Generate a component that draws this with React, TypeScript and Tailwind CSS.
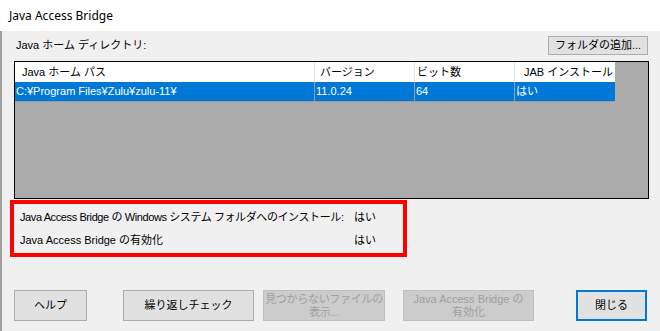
import React from "react";

const jp = "font-['Liberation_Sans','Noto_Sans_CJK_JP',sans-serif]";

function Btn({
  children,
  className = "",
  disabled = false,
  primary = false,
}: {
  children: React.ReactNode;
  className?: string;
  disabled?: boolean;
  primary?: boolean;
}) {
  const look = disabled
    ? "bg-[#cccccc] border border-[#bfbfbf] text-[#a0a0a0]"
    : primary
      ? "bg-[#e1e1e1] border-2 border-[#0078d7] text-black"
      : "bg-[#e1e1e1] border border-[#adadad] text-black";
  return (
    <div
      className={`h-[31px] flex flex-col items-center justify-center text-center leading-[13px] whitespace-nowrap ${look} ${className}`}
    >
      {children}
    </div>
  );
}

const cols = [
  { label: "Java ホーム パス", value: "C:¥Program Files¥Zulu¥zulu-11¥", w: "w-[300px]", pad: "pl-[7px]" },
  { label: "バージョン", value: "11.0.24", w: "w-[100px]", pad: "pl-[5px]" },
  { label: "ビット数", value: "64", w: "w-[100px]", pad: "pl-[2px]" },
  { label: "JAB インストール", value: "はい", w: "w-[100px]", pad: "pl-[9px]" },
];

export default function App() {
  return (
    <div className={`w-[660px] h-[331px] flex flex-col bg-[#f0f0f0] overflow-hidden whitespace-nowrap text-[11px] ${jp}`}>
      {/* Title bar */}
      <div className="h-[31px] shrink-0 bg-white flex items-center pl-[9px]">
        <span className="text-[12px] font-['Noto_Sans',sans-serif] text-black">
          Java Access Bridge
        </span>
      </div>

      <div className="flex-1 flex border-l-2 border-[#a0a0a0]">
        <div className="flex-1 flex flex-col pl-[12px] pr-[11px] text-black">
          {/* Home dir row */}
          <div className="mt-[5px] h-[19px] flex items-center justify-between">
            <span className="pl-[2px]">Java ホーム ディレクトリ:</span>
            <div className="h-[19px] w-[100px] mr-[1px] flex items-center justify-center bg-[#e1e1e1] border border-[#adadad]">
              フォルダの追加...
            </div>
          </div>

          {/* List view */}
          <div className="mt-[6px] h-[138px] w-[635px] border border-black bg-[#ababab] flex flex-col">
            <div className="h-[20px] flex">
              {cols.map((c, i) => (
                <div
                  key={c.label}
                  className={`${c.w} h-full bg-white flex items-center ${c.pad} ${i < 3 ? "border-r border-[#e5e5e5]" : ""}`}
                >
                  {c.label}
                </div>
              ))}
            </div>
            <div className="h-[20px] flex">
              {cols.map((c, i) => (
                <div
                  key={c.value}
                  className={`${c.w} h-full bg-[#0078d7] text-white flex items-center pl-[1px] border-b border-[#9a9a9a] ${i < 3 ? "border-r border-r-[#9a9a9a]" : ""}`}
                >
                  {c.value}
                </div>
              ))}
            </div>
          </div>

          {/* Highlighted status */}
          <div className="mt-[1px] ml-[-4px] w-[397px] h-[57px] border-4 border-[#ff0000] pl-[6px] pt-[3px]">
            <div className="grid grid-cols-[334px_1fr] h-[20px] items-center">
              <span className="tracking-[-0.4px]">Java Access Bridge の Windows システム フォルダへのインストール:</span>
              <span>はい</span>
            </div>
            <div className="grid grid-cols-[334px_1fr] h-[20px] items-center mt-[3px]">
              <span>Java Access Bridge の有効化</span>
              <span>はい</span>
            </div>
          </div>

          {/* Buttons */}
          <div className="mt-[33px] flex">
            <Btn className="w-[73px]">ヘルプ</Btn>
            <Btn className="w-[131px] ml-[36px]">繰り返しチェック</Btn>
            <Btn className="w-[122px] ml-[9px] tracking-[-0.3px]" disabled>
              <span>見つからないファイルの</span>
              <span>表示...</span>
            </Btn>
            <Btn className="w-[131px] ml-[18px]" disabled>
              <span>Java Access Bridge の</span>
              <span>有効化</span>
            </Btn>
            <Btn className="w-[71px] ml-[42px]" primary>
              閉じる
            </Btn>
          </div>
        </div>
      </div>
    </div>
  );
}
